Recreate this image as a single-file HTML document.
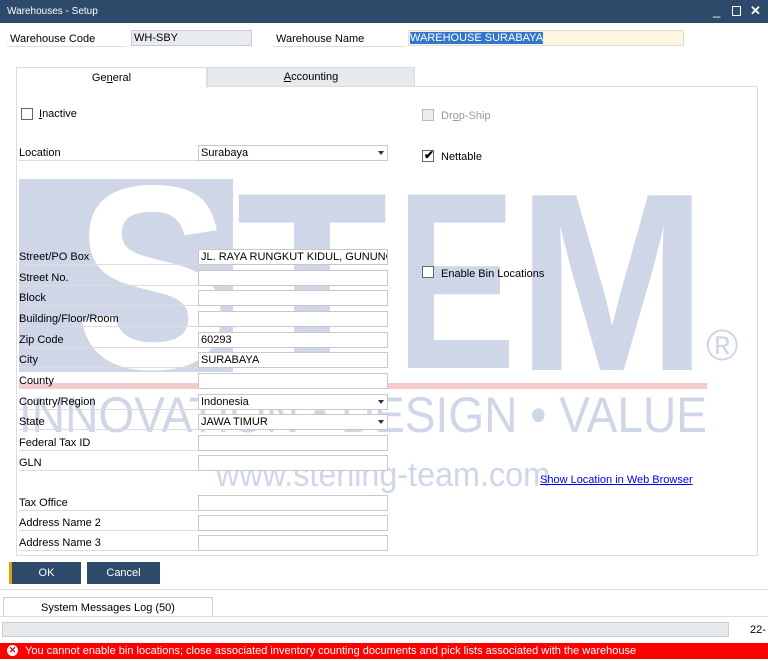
<!DOCTYPE html>
<html><head><meta charset="utf-8"><style>
*{margin:0;padding:0;box-sizing:border-box}
body{width:768px;height:661px;position:relative;background:#fff;font-family:"Liberation Sans",sans-serif;font-size:11px;color:#000;overflow:hidden}
.a{position:absolute}
.title{left:0;top:0;width:768px;height:23px;background:#2d4a6b;color:#fff;font-size:10px;padding:6px 0 0 7px}
.inp{position:absolute;left:198px;width:190px;height:16px;border:1px solid #c8c8c8;background:#fff;padding:1px 0 0 2px;white-space:nowrap;overflow:hidden}
.lbl{position:absolute;left:19px;width:179px;height:16px;border-bottom:1px solid #dcdcdc;padding-top:2px}
.cb{position:absolute;width:12px;height:12px;border:1px solid #666;background:#fff}
.btn{position:absolute;top:562px;height:22px;background:#2d4a6b;color:#fff;text-align:center;padding-top:5px;font-size:11px}
.arr{position:absolute;right:3px;top:5px;width:0;height:0;border-left:3px solid transparent;border-right:3px solid transparent;border-top:4px solid #333}
</style></head><body>
<div class="a title">Warehouses - Setup</div>
<div class="a" style="left:713px;top:3px;color:#fff;font-size:13px;">_</div>
<div class="a" style="left:732px;top:6px;width:9px;height:10px;border:1.5px solid #fff"></div>
<div class="a" style="left:750px;top:3px;color:#fff;font-size:13px;font-weight:bold">✕</div>

<div class="a" style="left:7px;top:30px;width:120px;height:17px;border-bottom:1px solid #ddd;padding:3px 0 0 3px">Warehouse Code</div>
<div class="a" style="left:131px;top:30px;width:121px;height:16px;background:#e8ecf0;border:1px solid #ccc;padding:1px 0 0 2px">WH-SBY</div>
<div class="a" style="left:273px;top:30px;width:132px;height:17px;border-bottom:1px solid #ddd;padding:3px 0 0 3px">Warehouse Name</div>
<div class="a" style="left:408px;top:30px;width:276px;height:16px;background:#fff6e1;border:1px solid #ddd;padding:1px 0 0 1px"><span style="background:#3377cc;color:#fff">WAREHOUSE SURABAYA</span></div>

<div class="a" style="left:16px;top:86px;width:742px;height:470px;border:1px solid #ddd"></div>
<div class="a" style="left:16px;top:67px;width:191px;height:21px;background:#fff;border:1px solid #ddd;border-bottom:none;text-align:center;padding-top:4px">Ge<u>n</u>eral</div>
<div class="a" style="left:207px;top:67px;width:208px;height:20px;background:#e6e9ee;border:1px solid #ddd;text-align:center;padding-top:3px"><u>A</u>ccounting</div>

<svg class="a" style="left:0;top:0" width="768" height="661">
<rect x="19" y="179" width="214" height="193" fill="#cfd6e8"/>
<text x="75" y="368" textLength="155" lengthAdjust="spacingAndGlyphs" font-family="Liberation Sans" font-weight="bold" font-size="262" fill="#fff">S</text>
<text x="236" y="368" textLength="152" lengthAdjust="spacingAndGlyphs" font-family="Liberation Sans" font-weight="bold" font-size="252" fill="#cfd6e8">T</text>
<text x="396" y="368" textLength="120" lengthAdjust="spacingAndGlyphs" font-family="Liberation Sans" font-weight="bold" font-size="252" fill="#cfd6e8">E</text>
<text x="517" y="370" textLength="190" lengthAdjust="spacingAndGlyphs" font-family="Liberation Sans" font-weight="bold" font-size="254" fill="#cfd6e8">M</text>
<text x="706" y="360" font-family="Liberation Sans" font-size="44" fill="#cfd6e8">®</text>
<rect x="19" y="383" width="688" height="6" fill="#f6caca"/>
<text x="19" y="432" textLength="688" lengthAdjust="spacingAndGlyphs" font-family="Liberation Sans" font-size="50" fill="#cfd6e8">INNOVATION • DESIGN • VALUE</text>
<text x="216" y="486" textLength="334" lengthAdjust="spacingAndGlyphs" font-family="Liberation Sans" font-size="34" fill="#cfd6e8">www.sterling-team.com</text>
</svg>

<div class="cb" style="left:21px;top:108px"></div><div class="a" style="left:39px;top:108px"><u>I</u>nactive</div>
<div class="cb" style="left:422px;top:109px;border-color:#bbb;background:#eee"></div><div class="a" style="left:441px;top:110px;color:#999">Dr<u>o</u>p-Ship</div>
<div class="lbl" style="top:145px">Location</div>
<div class="inp" style="top:145px">Surabaya<div class="arr"></div></div>
<div class="cb" style="left:422px;top:150px"><div class="a" style="left:1px;top:-3px;font-size:12px;font-weight:bold">✔</div></div><div class="a" style="left:441px;top:151px">Nettable</div>
<div class="cb" style="left:422px;top:266px"></div><div class="a" style="left:441px;top:268px">Enable Bin Locations</div>

<div class="lbl" style="top:249px">Street/PO Box</div><div class="inp" style="top:249px">JL. RAYA RUNGKUT KIDUL, GUNUNGA</div>
<div class="lbl" style="top:270px">Street No.</div><div class="inp" style="top:270px"></div>
<div class="lbl" style="top:290px">Block</div><div class="inp" style="top:290px"></div>
<div class="lbl" style="top:311px">Building/Floor/Room</div><div class="inp" style="top:311px"></div>
<div class="lbl" style="top:332px">Zip Code</div><div class="inp" style="top:332px">60293</div>
<div class="lbl" style="top:352px">City</div><div class="inp" style="top:352px">SURABAYA</div>
<div class="lbl" style="top:373px">County</div><div class="inp" style="top:373px"></div>
<div class="lbl" style="top:394px">Country/Region</div><div class="inp" style="top:394px">Indonesia<div class="arr"></div></div>
<div class="lbl" style="top:414px">State</div><div class="inp" style="top:414px">JAWA TIMUR<div class="arr"></div></div>
<div class="lbl" style="top:435px">Federal Tax ID</div><div class="inp" style="top:435px"></div>
<div class="lbl" style="top:455px">GLN</div><div class="inp" style="top:455px"></div>
<div class="a" style="left:540px;top:474px;color:#0000ee;text-decoration:underline">Show Location in Web Browser</div>
<div class="lbl" style="top:495px">Tax Office</div><div class="inp" style="top:495px"></div>
<div class="lbl" style="top:515px">Address Name 2</div><div class="inp" style="top:515px"></div>
<div class="lbl" style="top:535px">Address Name 3</div><div class="inp" style="top:535px"></div>

<div class="btn" style="left:9px;width:72px;border-left:3px solid #e0a000">OK</div>
<div class="btn" style="left:87px;width:73px">Cancel</div>
<div class="a" style="left:0;top:589px;width:768px;height:1px;background:#ddd"></div>
<div class="a" style="left:3px;top:597px;width:210px;height:20px;border:1px solid #ccc;border-bottom:none;text-align:center;padding-top:4px">System Messages Log (50)</div>
<div class="a" style="left:0;top:616px;width:768px;height:1px;background:#ddd"></div>
<div class="a" style="left:2px;top:622px;width:727px;height:15px;background:#e6e9ec;border:1px solid #ccc"></div>
<div class="a" style="left:750px;top:624px">22-</div>
<div class="a" style="left:0;top:643px;width:768px;height:16px;background:#ff0000;color:#fff;padding:2px 0 0 25px">You cannot enable bin locations; close associated inventory counting documents and pick lists associated with the warehouse</div>
<div class="a" style="left:7px;top:645px;width:11px;height:11px;border-radius:50%;background:#fff;color:#e00;font-size:9px;font-weight:bold;text-align:center;line-height:11px">✕</div>
</body></html>
